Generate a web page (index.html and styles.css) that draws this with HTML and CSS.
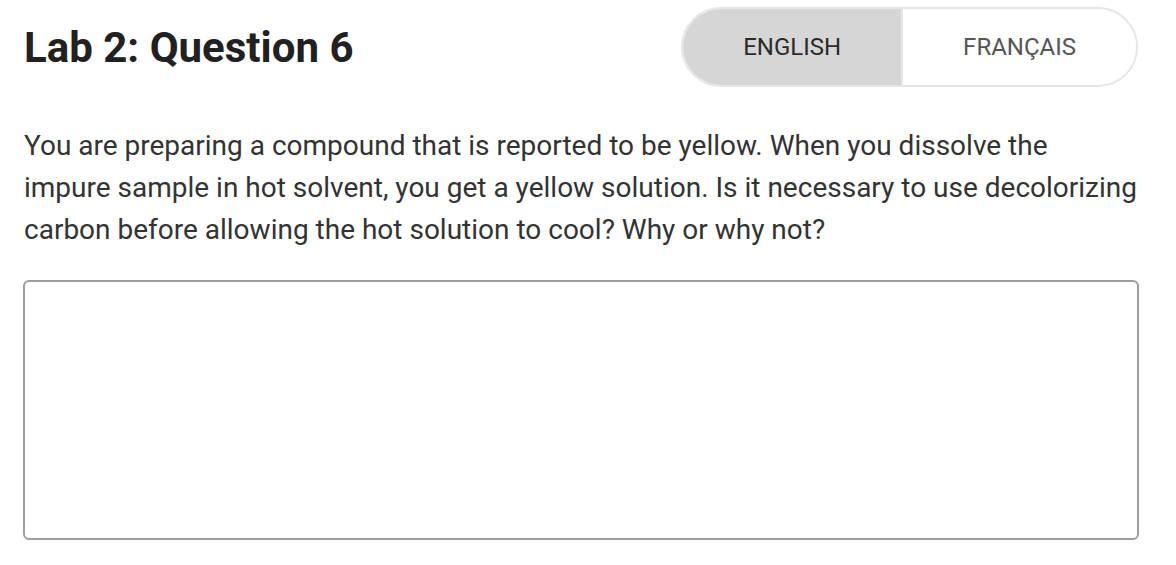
FILE: index.html
```html
<!DOCTYPE html>
<html lang="en">
<head>
<meta charset="utf-8">
<title>Lab 2: Question 6</title>
<link rel="stylesheet" href="styles.css">
</head>
<body>
<main class="page">
  <header class="header">
    <h1 class="title">Lab 2: Question 6</h1>
    <div class="lang-toggle">
      <button class="lang-btn active" type="button">ENGLISH</button>
      <button class="lang-btn" type="button">FRANÇAIS</button>
    </div>
  </header>
  <p class="question">You are preparing a compound that is reported to be yellow. When you dissolve the impure sample in hot solvent, you get a yellow solution. Is it necessary to use decolorizing carbon before allowing the hot solution to cool? Why or why not?</p>
  <textarea class="answer" aria-label="Answer"></textarea>
</main>
</body>
</html>
```

FILE: styles.css
```css
html, body {
  margin: 0;
  padding: 0;
  background: #ffffff;
}

body {
  font-family: Roboto, "Liberation Sans", Arial, sans-serif;
  color: #333333;
}

.page {
  width: 1116px;
  padding: 7px 0 0 23px;
  box-sizing: content-box;
}

.header {
  display: flex;
  align-items: center;
  justify-content: space-between;
  height: 80px;
  padding-right: 1px;
}

.title {
  margin: 2px 0 0 1px;
  font-size: 42px;
  font-weight: 700;
  color: #212121;
  line-height: 1;
}

.lang-toggle {
  display: flex;
  height: 80px;
  box-sizing: border-box;
  border: 2px solid #e6e6e6;
  border-radius: 40px;
  overflow: hidden;
  background: #ffffff;
}

.lang-btn {
  font-family: Roboto, "Liberation Sans", Arial, sans-serif;
  font-size: 24px;
  color: #555555;
  background: #ffffff;
  border: 0;
  margin: 0;
  padding: 0 60px;
  cursor: pointer;
}

.lang-btn.active {
  background: #d6d6d6;
  color: #2b2b2b;
  border-right: 2px solid #e6e6e6;
}

.question {
  margin: 38px 0 0 1px;
  font-size: 28px;
  line-height: 42px;
  color: #333333;
}

.answer {
  display: block;
  margin-top: 29px;
  width: 1116px;
  height: 260px;
  box-sizing: border-box;
  border: 2px solid #9e9e9e;
  border-radius: 6px;
  resize: none;
  font-family: Roboto, "Liberation Sans", Arial, sans-serif;
  font-size: 20px;
  padding: 10px;
  outline: none;
}
```
